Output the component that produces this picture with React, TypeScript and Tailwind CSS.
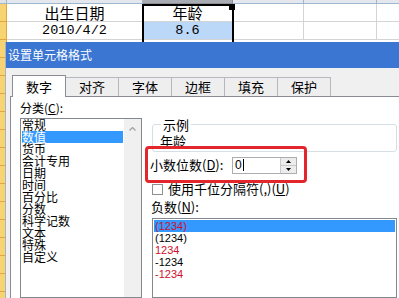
import React from "react";

const cats = ["常规", "数值", "货币", "会计专用", "日期", "时间", "百分比", "分数", "科学记数", "文本", "特殊", "自定义"];
const tabs = ["数字", "对齐", "字体", "边框", "填充", "保护"];
const negs = [
  { t: "(1234)", red: true },
  { t: "(1234)", red: false },
  { t: "1234", red: true },
  { t: "-1234", red: false },
  { t: "-1234", red: true },
];

export default function App() {
  return (
    <div className="relative w-[399px] h-[298px] overflow-hidden bg-white text-black font-['Noto_Sans_CJK_SC','Liberation_Sans',sans-serif]">
      {/* sheet behind the dialog */}
      <div className="flex">
        <div className="w-[7px] flex flex-col shrink-0">
          <div className="h-[4px] bg-[#dfe3e8] border-b border-r border-[#9eb6ce]" />
          {Array.from({ length: 17 }).map((_, i) => (
            <div key={i} className="h-[18px] bg-[#f7d372] border-b border-r border-[#e0a53c]" />
          ))}
        </div>
        <div className="flex-1 flex flex-col">
          <div className="flex h-[4px]">
            <div className="w-[136px] bg-[#e4e8ee] border-r border-b border-[#9eb6ce]" />
            <div className="w-[90px] bg-[#a9adb3] border-r border-b border-[#8c9096]" />
            <div className="w-[71px] bg-[#e4e8ee] border-r border-b border-[#9eb6ce]" />
            <div className="w-[73px] bg-[#e4e8ee] border-r border-b border-[#9eb6ce]" />
            <div className="flex-1 bg-[#e4e8ee] border-b border-[#9eb6ce]" />
          </div>
          <div className="flex h-[18px]">
            <div className="w-[136px] border-r border-b border-[#d4d4d4] flex items-center justify-center text-[15px] leading-[17px]">出生日期</div>
            <div className="w-[90px] border-r border-b border-[#d4d4d4] flex items-center justify-center text-[15px] leading-[17px]">年龄</div>
            <div className="w-[71px] border-r border-b border-[#d4d4d4]" />
            <div className="w-[73px] border-r border-b border-[#d4d4d4]" />
            <div className="flex-1 border-b border-[#d4d4d4]" />
          </div>
          <div className="flex h-[18px]">
            <div className="w-[136px] border-r border-b border-[#d4d4d4] flex items-center justify-center font-['Liberation_Mono',monospace] text-[13.5px] leading-[17px]">2010/4/2</div>
            <div className="w-[90px] bg-[#bcd8f8] border-r border-b border-[#d4d4d4] flex items-center justify-center font-['Liberation_Mono',monospace] text-[13.5px] leading-[17px]">8.6</div>
            <div className="w-[71px] border-r border-b border-[#d4d4d4]" />
            <div className="w-[73px] border-r border-b border-[#d4d4d4]" />
            <div className="flex-1 border-b border-[#d4d4d4]" />
          </div>
        </div>
      </div>
      {/* selection frame + fill handle */}
      <div className="absolute left-[142px] top-[4px] w-[92px] h-[40px] border-2 border-black" />
      <div className="absolute left-[229px] top-[4px] w-[6px] h-[6px] bg-black" />

      {/* dialog window */}
      <div className="absolute left-[5px] top-[42px] right-0 bottom-0 flex flex-col bg-[#f0f0f0] border-l border-[#a7b4c6]">
        <div className="h-[26px] shrink-0 bg-[#3b76d3] text-white text-[12px] leading-[26px] pl-[2px]">设置单元格格式</div>
        <div className="flex-1 flex flex-col pl-[4px] pt-[7px]">
          <div className="flex items-end h-[21px] ml-[2px]">
            {tabs.map((t, i) => (
              <div
                key={t}
                className={
                  i === 0
                    ? "relative z-10 -mb-px w-[54px] h-[22px] bg-white border border-b-0 border-[#898c95] flex items-center justify-center text-[13px]"
                    : "w-[53px] h-[19px] bg-[#eeeeee] border-t border-r border-[#b5b8bf] flex items-center justify-center text-[13px]"
                }
              >
                {t}
              </div>
            ))}
          </div>
          <div className="flex-1 bg-white border-t border-l border-[#898c95]">
            <div className="h-[21px] flex items-center pl-[9px] text-[12px] leading-[12px]">
              分类(<span className="underline">C</span>):
            </div>
            <div className="flex">
              <div className="ml-[9px] w-[122px] h-[180px] border border-[#828790] bg-white flex">
                <div className="flex-1 px-px text-[12px] leading-[12px]">
                  {cats.map((c, i) => (
                    <div key={c} className={i === 1 ? "h-[12px] bg-[#3399ff] text-white" : "h-[12px]"}>
                      {c}
                    </div>
                  ))}
                </div>
                <div className="w-[17px] bg-[#f0f0f0] flex flex-col items-center pt-[8px]">
                  <svg width="7" height="4" viewBox="0 0 7 4">
                    <path d="M0.5 3.5 L3.5 0.5 L6.5 3.5" fill="none" stroke="#a0a0a0" strokeWidth="1.2" />
                  </svg>
                </div>
              </div>

              <div className="ml-[10px] w-[245px] flex flex-col">
                <fieldset className="h-[34px] border border-[#d5dfe5] rounded-[3px] pl-[7px]">
                  <legend className="ml-[1px] px-[2px] text-[13px] leading-[13px]">示例</legend>
                  <div className="pt-[3px] text-[13px] leading-[13px]">年龄</div>
                </fieldset>

                <div className="h-[26px] flex items-center">
                  <span className="-ml-[2px] w-[82px] text-[13px] leading-[14px] whitespace-nowrap">
                    小数位数(<span className="underline">D</span>):
                  </span>
                  <div className="w-[65px] h-[17px] border border-[#abadb3] bg-white flex">
                    <div className="flex-1 flex items-center pl-[2px] text-[12px] font-['Liberation_Sans',sans-serif]">
                      0<span className="w-px h-[12px] bg-black ml-[1px]" />
                    </div>
                    <div className="w-[16px] flex flex-col border-l border-[#c8c8c8] bg-[#ececec]">
                      <div className="flex-1 flex items-center justify-center border-b border-[#c8c8c8]">
                        <svg width="5" height="3" viewBox="0 0 5 3"><path d="M0 3 L2.5 0 L5 3 Z" fill="#000" /></svg>
                      </div>
                      <div className="flex-1 flex items-center justify-center">
                        <svg width="5" height="3" viewBox="0 0 5 3"><path d="M0 0 L2.5 3 L5 0 Z" fill="#000" /></svg>
                      </div>
                    </div>
                  </div>
                </div>

                <div className="h-[22px] flex items-center gap-[5px]">
                  <div className="w-[11px] h-[11px] border border-[#8e8f8f] bg-white" />
                  <span className="text-[13px] leading-[14px] whitespace-nowrap">
                    使用千位分隔符(,)(<span className="underline">U</span>)
                  </span>
                </div>

                <div className="h-[14px] -ml-px flex items-center text-[13px] leading-[14px]">
                  负数(<span className="underline">N</span>):
                </div>

                <div className="mt-[4px] h-[80px] border border-[#828790] bg-white p-px font-['Liberation_Sans',sans-serif] text-[11px] leading-[12px]">
                  {negs.map((n, i) => (
                    <div
                      key={i}
                      className={`h-[12px] pl-[1px] ${i === 0 ? "bg-[#3399ff]" : ""} ${n.red ? "text-[#d0102c]" : "text-black"}`}
                    >
                      {n.t}
                    </div>
                  ))}
                </div>
              </div>
            </div>
          </div>
        </div>
      </div>

      {/* red annotation box */}
      <div className="absolute left-[145px] top-[146px] w-[162px] h-[37px] border-[3px] border-[#e2262b] rounded-[4px]" />
    </div>
  );
}
